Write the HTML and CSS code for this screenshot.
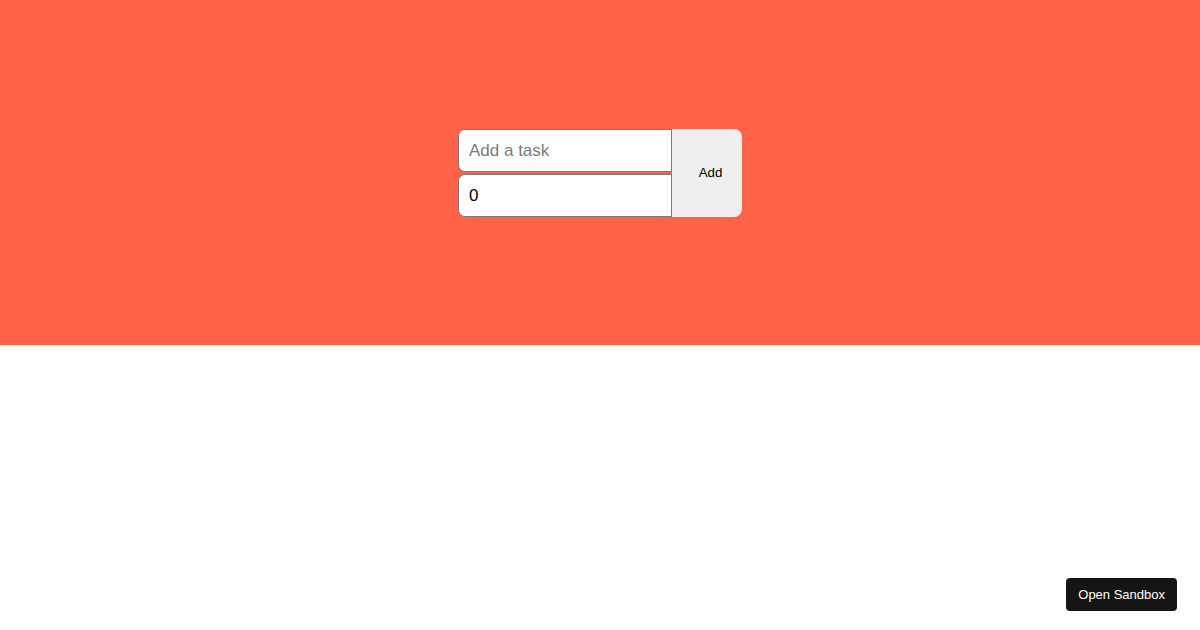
FILE: index.html
```html
<!DOCTYPE html>
<html>
<head>
<meta charset="utf-8">
<link rel="stylesheet" href="styles.css">
</head>
<body>
<header class="hero">
  <form class="task-form">
    <div class="fields">
      <input class="field field-top" type="text" placeholder="Add a task">
      <input class="field field-bottom" type="number" value="0">
    </div>
    <button class="add-btn" type="button">Add</button>
  </form>
</header>
<a class="sandbox-btn">Open Sandbox</a>
</body>
</html>
```
FILE: styles.css
```css
html, body {
  margin: 0;
  padding: 0;
  background: #ffffff;
  font-family: "Liberation Sans", Arial, sans-serif;
}

.hero {
  height: 345px;
  background: #ff6347;
  display: flex;
  align-items: center;
  justify-content: center;
}

.task-form {
  display: flex;
  align-items: stretch;
}

.fields {
  display: flex;
  flex-direction: column;
  gap: 2px;
}

.field {
  box-sizing: border-box;
  width: 214px;
  height: 43px;
  margin: 0;
  padding: 2px 10px 0;
  border: 1px solid #7a7a7a;
  border-radius: 7px 0 0 7px;
  background: #ffffff;
  font-family: "Liberation Sans", Arial, sans-serif;
  font-size: 17px;
  color: #000000;
  outline: none;
  -moz-appearance: textfield;
}

.field::placeholder {
  color: #7b7b7b;
}

.field::-webkit-outer-spin-button,
.field::-webkit-inner-spin-button {
  -webkit-appearance: none;
  margin: 0;
}

.add-btn {
  box-sizing: border-box;
  width: 70px;
  margin: 0;
  padding: 0 0 0 7px;
  border: none;
  border-radius: 0 8px 8px 0;
  background: #efefef;
  font-family: "Liberation Sans", Arial, sans-serif;
  font-size: 13.3px;
  color: #000000;
}

.sandbox-btn {
  position: fixed;
  right: 23px;
  bottom: 19px;
  box-sizing: border-box;
  height: 33px;
  padding: 0 12px;
  display: flex;
  align-items: center;
  background: #151515;
  color: #ffffff;
  border-radius: 4px;
  font-family: "Liberation Sans", Arial, sans-serif;
  font-size: 13px;
}
```
